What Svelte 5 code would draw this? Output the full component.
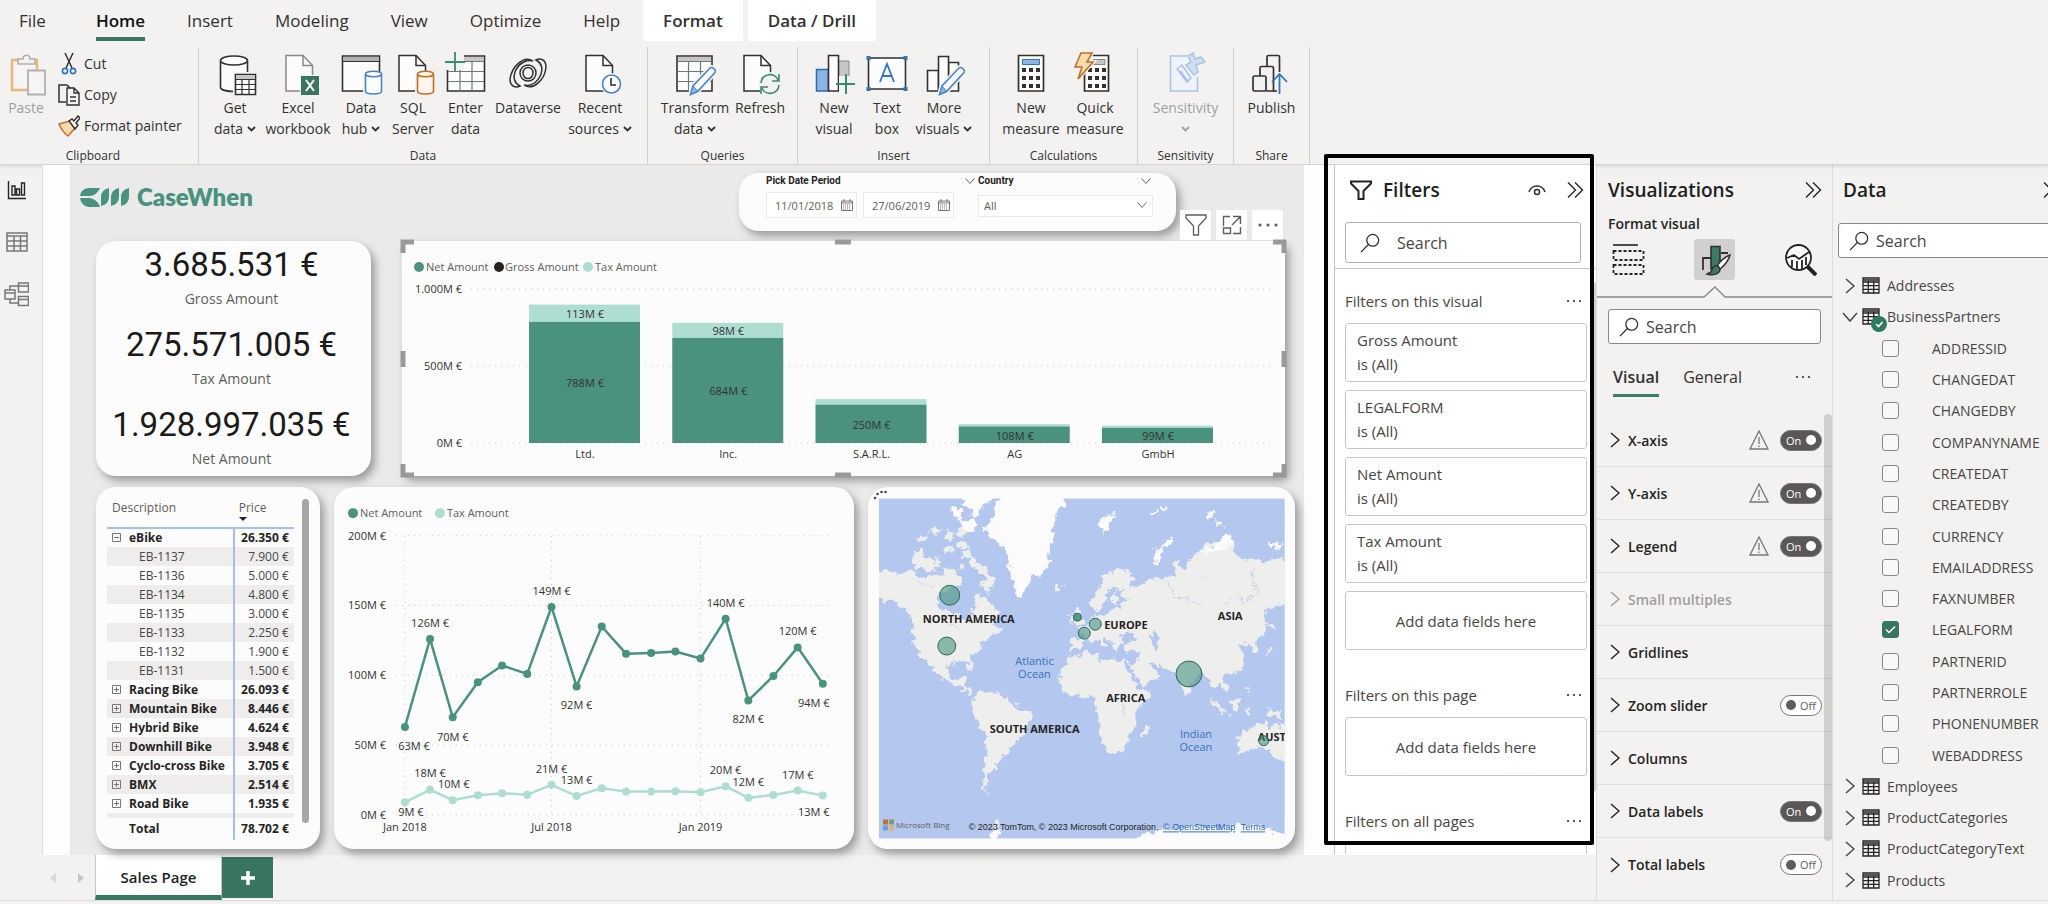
<script>
  const menu = ['File', 'Home', 'Insert', 'Modeling', 'View', 'Optimize', 'Help']
  const contextMenu = ['Format', 'Data / Drill']

  const groups = [
    {
      id: 'get',
      label: 'Data',
      tools: [
        { icon: 'getdata', lines: ['Get', 'data'], menu: true },
        { icon: 'excel', lines: ['Excel', 'workbook'] },
        { icon: 'hub', lines: ['Data', 'hub'], menu: true },
        { icon: 'sql', lines: ['SQL', 'Server'] },
        { icon: 'enter', lines: ['Enter', 'data'] },
        { icon: 'dataverse', lines: ['Dataverse'] },
        { icon: 'recent', lines: ['Recent', 'sources'], menu: true }
      ]
    },
    {
      id: 'queries',
      label: 'Queries',
      tools: [
        { icon: 'transform', lines: ['Transform', 'data'], menu: true },
        { icon: 'refresh', lines: ['Refresh'] }
      ]
    },
    {
      id: 'insert',
      label: 'Insert',
      tools: [
        { icon: 'newvisual', lines: ['New', 'visual'] },
        { icon: 'textbox', lines: ['Text', 'box'] },
        { icon: 'morevisuals', lines: ['More', 'visuals'], menu: true }
      ]
    },
    {
      id: 'calc',
      label: 'Calculations',
      tools: [
        { icon: 'measure', lines: ['New', 'measure'] },
        { icon: 'quick', lines: ['Quick', 'measure'] }
      ]
    },
    {
      id: 'single',
      label: 'Sensitivity',
      tools: [{ icon: 'sensitivity', lines: ['Sensitivity', ''], menu: true, disabled: true }]
    },
    { id: 'single', label: 'Share', tools: [{ icon: 'publish', lines: ['Publish'] }] }
  ]

  const kpis = [
    { value: '3.685.531 €', label: 'Gross Amount' },
    { value: '275.571.005 €', label: 'Tax Amount' },
    { value: '1.928.997.035 €', label: 'Net Amount' }
  ]

  const products = [
    { name: 'eBike', price: '26.350 €', open: true },
    { name: 'EB-1137', price: '7.900 €', child: true },
    { name: 'EB-1136', price: '5.000 €', child: true },
    { name: 'EB-1134', price: '4.800 €', child: true },
    { name: 'EB-1135', price: '3.000 €', child: true },
    { name: 'EB-1133', price: '2.250 €', child: true },
    { name: 'EB-1132', price: '1.900 €', child: true },
    { name: 'EB-1131', price: '1.500 €', child: true },
    { name: 'Racing Bike', price: '26.093 €' },
    { name: 'Mountain Bike', price: '8.446 €' },
    { name: 'Hybrid Bike', price: '4.624 €' },
    { name: 'Downhill Bike', price: '3.948 €' },
    { name: 'Cyclo-cross Bike', price: '3.705 €' },
    { name: 'BMX', price: '2.514 €' },
    { name: 'Road Bike', price: '1.935 €' }
  ]

  // bar chart, values in millions
  const legalForms = [
    { name: 'Ltd.', net: 788, tax: 113 },
    { name: 'Inc.', net: 684, tax: 98 },
    { name: 'S.A.R.L.', net: 250, tax: 36 },
    { name: 'AG', net: 108, tax: 15 },
    { name: 'GmbH', net: 99, tax: 14 }
  ]
  const bars = legalForms.map((f, i) => {
    const x = 127 + i * 143.25
    const netH = f.net * 0.1536
    const taxH = f.tax * 0.1536
    return { ...f, x, netH, taxH, netY: 202 - netH, taxY: 202 - netH - taxH }
  })

  // line chart, one point per month start, values in millions
  const days = [0, 31, 59, 90, 120, 151, 181, 212, 243, 273, 304, 334, 365, 396, 424, 455, 485, 516]
  const net = [63, 126, 70, 95, 107, 101, 149, 92, 135, 115.5, 116, 117, 112, 140.5, 82, 99.5, 120, 94]
  const tax = [9, 18, 10.5, 14, 15.5, 14.5, 21.5, 13.5, 19, 16.7, 16.7, 17, 16.2, 20.5, 12.2, 14.3, 17.4, 13.8]
  const px = i => 71 + days[i] * 0.8105
  const py = v => 328 - v * 1.397
  const line = values => values.map((v, i) => `${px(i)},${py(v)}`).join(' ')

  const netLabels = [
    { i: 0, text: '63M €', dx: 9, dy: 23 },
    { i: 1, text: '126M €', dx: 0, dy: -12 },
    { i: 2, text: '70M €', dx: 0, dy: 24 },
    { i: 6, text: '149M €', dx: 0, dy: -12 },
    { i: 7, text: '92M €', dx: 0, dy: 23 },
    { i: 13, text: '140M €', dx: 0, dy: -12 },
    { i: 14, text: '82M €', dx: 0, dy: 23 },
    { i: 16, text: '120M €', dx: 0, dy: -12 },
    { i: 17, text: '94M €', dx: -9, dy: 23 }
  ]
  const taxLabels = [
    { i: 0, text: '9M €', dx: 6, dy: 14 },
    { i: 1, text: '18M €', dx: 0, dy: -13 },
    { i: 2, text: '10M €', dx: 1, dy: -12 },
    { i: 6, text: '21M €', dx: 0, dy: -12 },
    { i: 7, text: '13M €', dx: 0, dy: -12 },
    { i: 13, text: '20M €', dx: 0, dy: -12 },
    { i: 14, text: '12M €', dx: 0, dy: -12 },
    { i: 16, text: '17M €', dx: 0, dy: -12 },
    { i: 17, text: '13M €', dx: -9, dy: 20 }
  ]

  const bubbles = [
    { x: 71, y: 97, r: 10 },
    { x: 68, y: 148, r: 9 },
    { x: 199, y: 119, r: 4, dark: true },
    { x: 217, y: 126, r: 6 },
    { x: 206, y: 135, r: 6 },
    { x: 311, y: 176, r: 13 },
    { x: 386, y: 243, r: 5 }
  ]

  const visualFilters = ['Gross Amount', 'LEGALFORM', 'Net Amount', 'Tax Amount']

  let settings = $state([
    { name: 'X-axis', warn: true, on: true },
    { name: 'Y-axis', warn: true, on: true },
    { name: 'Legend', warn: true, on: true },
    { name: 'Small multiples', disabled: true },
    { name: 'Gridlines' },
    { name: 'Zoom slider', on: false },
    { name: 'Columns' },
    { name: 'Data labels', on: true },
    { name: 'Total labels', on: false }
  ])

  let fields = $state(
    [
      'ADDRESSID', 'CHANGEDAT', 'CHANGEDBY', 'COMPANYNAME', 'CREATEDAT', 'CREATEDBY', 'CURRENCY',
      'EMAILADDRESS', 'FAXNUMBER', 'LEGALFORM', 'PARTNERID', 'PARTNERROLE', 'PHONENUMBER', 'WEBADDRESS'
    ].map(name => ({ name, checked: name === 'LEGALFORM' }))
  )
  const moreTables = ['Employees', 'ProductCategories', 'ProductCategoryText', 'Products']
</script>

{#snippet chevron(dir)}
  <svg class="chev {dir}" viewBox="0 0 10 16" width="10" height="16" aria-hidden="true">
    <path d="M1 1l8 7-8 7" fill="none" stroke="currentColor" stroke-width="1.5" />
  </svg>
{/snippet}

{#snippet caret()}
  <svg class="caret" viewBox="0 0 9 6" width="9" height="6" aria-hidden="true">
    <path d="M1 1l3.500 3.500L8 1" fill="none" stroke="currentColor" stroke-width="1.800" />
  </svg>
{/snippet}

{#snippet collapse()}
  <svg viewBox="0 0 17 18" width="17" height="18" aria-hidden="true">
    <path d="M1 1.500l7.500 7.500L1 16.500M8 1.500l7.500 7.500L8 16.500" fill="none" stroke="#252423" stroke-width="1.400" />
  </svg>
{/snippet}

{#snippet magnifier()}
  <svg class="magnifier" viewBox="0 0 22 22" width="20" height="20" aria-hidden="true">
    <circle cx="14" cy="8" r="6.500" fill="none" stroke="#323130" stroke-width="1.400" />
    <path d="M9.300 12.700L1 21" stroke="#323130" stroke-width="1.400" />
  </svg>
{/snippet}

{#snippet dots()}
  <svg viewBox="0 0 18 4" width="18" height="4" aria-hidden="true">
    <circle cx="3" cy="2" r="1.100" fill="#323130" /><circle cx="9" cy="2" r="1.100" fill="#323130" /><circle cx="15" cy="2" r="1.100" fill="#323130" />
  </svg>
{/snippet}

{#snippet tableIcon()}
  <svg viewBox="0 0 18 17" width="18" height="17" aria-hidden="true">
    <path d="M1 1h16v15H1zM1 3h16M1 5h16M1 8.700h16M1 12.300h16M6.300 4v12M11.700 4v12" fill="none" stroke="#252423" stroke-width="1.300" />
  </svg>
{/snippet}

{#snippet doc(x, stroke)}
  <path d="M{x} 3.500h17l9.500 10V39H{x}z" fill="#fcfcfc" stroke={stroke} stroke-width="1.500" />
  <path d="M{x + 17} 3.500v10h9.500" fill="none" stroke={stroke} stroke-width="1.500" />
{/snippet}

{#snippet smallCylinder(stroke, fill)}
  <path d="M26.500 22v17c0 4 16 4 16 0V22" fill="#f3f2f1" stroke="#f3f2f1" stroke-width="5" />
  <path d="M26.500 22v17c0 4 16 4 16 0V22" fill={fill} stroke={stroke} stroke-width="1.600" />
  <ellipse cx="34.500" cy="22" rx="8" ry="2.800" fill={fill} stroke={stroke} stroke-width="1.600" />
{/snippet}

{#snippet pencil()}
  <path d="M17.500 42.500l2.500-8.500 17-18c2-1.500 6.500 1.500 5 4.500L24.500 39.500z" fill="#f3f2f1" stroke="#f3f2f1" stroke-width="5" />
  <path d="M17.500 42.500l2.500-8.500 17-18c2-1.500 6.500 1.500 5 4.500L24.500 39.500z" fill="#fcfcfc" stroke="#4a83c4" stroke-width="1.600" />
  <path d="M17.500 42.500l2.500-8.500 4.500 5z" fill="#8ab4e6" stroke="#4a83c4" />
{/snippet}

{#snippet keypad(x)}
  {#each [18, 26, 34] as ky}
    {#each [3, 10, 17] as kx}
      <rect x={x + kx + 1} y={ky - 2} width="4" height="4" fill="#323130" />
    {/each}
  {/each}
{/snippet}

{#snippet toolIcon(name)}
  <svg class="tool-icon" viewBox="0 0 44 44" width="44" height="44" aria-hidden="true">
    {#if name === 'getdata'}
      <path d="M7.500 9v26c0 6 27 6 27 0V9" fill="#fcfcfc" stroke="#323130" stroke-width="1.600" />
      <ellipse cx="21" cy="8.500" rx="13.500" ry="4.500" fill="#fcfcfc" stroke="#323130" stroke-width="1.600" />
      <path d="M20 20h25v25H20z" fill="#f3f2f1" />
      <path d="M22.500 22.500h20v20h-20z" fill="#fcfcfc" stroke="#323130" stroke-width="1.600" />
      <path d="M23 23h19v4H23z" fill="#c8c6c4" />
      <path d="M22.500 27.500h20M22.500 32.500h20M22.500 37.500h20M29 27v15M36 27v15" stroke="#323130" stroke-width="1.200" />
    {:else if name === 'excel'}
      {@render doc(10, '#8a8886')}
      <path d="M24 23h20v20H24z" fill="#f3f2f1" />
      <path d="M25 24h18v19H25z" fill="#3a7562" />
      <path d="M30 28l8 11M38 28l-8 11" stroke="#fff" stroke-width="2" />
    {:else if name === 'hub'}
      <path d="M3.500 4h37v35h-37z" fill="#fcfcfc" stroke="#323130" stroke-width="1.600" />
      <path d="M4 5h36v4H4z" fill="#b3b0ad" />
      <path d="M4 9.500h36" stroke="#323130" />
      {@render smallCylinder('#4a83c4', '#fcfcfc')}
    {:else if name === 'sql'}
      {@render doc(8, '#323130')}
      {@render smallCylinder('#c0702a', '#fcf5ec')}
    {:else if name === 'enter'}
      <path d="M3.500 4h37v35h-37z" fill="#fcfcfc" stroke="#323130" stroke-width="1.600" />
      <path d="M16 5h24v4H16z" fill="#c8c6c4" />
      <path d="M16 9.500h24M4 19.500h36M4 29.500h36M16 9v30M28 9v30" stroke="#69797e" stroke-width="1.200" />
      <path d="M0 0h20v18H0z" fill="#f3f2f1" />
      <path d="M11 0v20M1 10h20" stroke="#3a8a6c" stroke-width="1.800" />
    {:else if name === 'dataverse'}
      <g fill="none" stroke="#323130" stroke-width="1.500">
        <path d="M27 9C18 3 6 14 4 27c0 8 6 9 10 7-6-3-7-9-5-14 3-8 11-13 18-11z" />
        <path d="M18 33c9 6 21-5 22-18 0-8-6-9-10-7 6 3 7 9 5 14-3 8-10 13-17 11z" />
        <ellipse cx="22" cy="21" rx="8" ry="8" />
        <ellipse cx="22" cy="21" rx="5" ry="5.500" />
      </g>
    {:else if name === 'recent'}
      {@render doc(8, '#323130')}
      <circle cx="33.500" cy="32" r="11" fill="#f3f2f1" />
      <circle cx="33.500" cy="32" r="9" fill="#fcfcfc" stroke="#4a83c4" stroke-width="1.600" />
      <path d="M33 26v7h5" fill="none" stroke="#323130" stroke-width="1.600" />
    {:else if name === 'transform'}
      <path d="M4 4h35v35H4z" fill="#fcfcfc" stroke="#323130" stroke-width="1.600" />
      <path d="M5 5h33v4H5z" fill="#c8c6c4" />
      <path d="M4 9.500h35M4 19.500h35M4 29.500h35M15.500 9v30M27.500 9v30" stroke="#69797e" stroke-width="1.200" />
      {@render pencil()}
    {:else if name === 'refresh'}
      {@render doc(6, '#323130')}
      <circle cx="32" cy="32" r="12" fill="#f3f2f1" />
      <path d="M23 31c1-10 14-11 17-3M41 33c-1 10-14 11-17 3" fill="none" stroke="#3a8a6c" stroke-width="1.600" />
      <path d="M41 22v7h-7M23 42v-7h7" fill="none" stroke="#3a8a6c" stroke-width="1.600" />
    {:else if name === 'newvisual'}
      <path d="M26 9h11v30H26z" fill="#c8c6c4" stroke="#8a8886" />
      <path d="M4.500 17.500h12V39h-12z" fill="#8ab4e6" stroke="#2b6cb0" stroke-width="1.500" />
      <path d="M16.500 3.500h10V39h-10z" fill="#fcfcfc" stroke="#323130" stroke-width="1.600" />
      <path d="M27 24h17v18H27z" fill="#f3f2f1" />
      <path d="M34 22v20M24 32h19" stroke="#3a8a6c" stroke-width="2" />
    {:else if name === 'textbox'}
      <path d="M3.500 6h37v31h-37z" fill="#fcfcfc" stroke="#323130" stroke-width="1.600" />
      <path d="M1.500 4h4v4h-4zM38.500 4h4v4h-4zM1.500 35h4v4h-4zM38.500 35h4v4h-4z" fill="#3173bd" />
      <path d="M15 30l7-18 7 18M17.500 24h9" fill="none" stroke="#3173bd" stroke-width="1.800" />
    {:else if name === 'morevisuals'}
      <path d="M5.500 18.500h11V39h-11zM26.500 10.500h10V39h-10z" fill="#fcfcfc" stroke="#323130" stroke-width="1.600" />
      <path d="M16.500 4.500h10V39h-10z" fill="#fcfcfc" stroke="#323130" stroke-width="1.600" />
      {@render pencil()}
    {:else if name === 'measure'}
      <path d="M9.500 3.500h25V39h-25z" fill="#fcfcfc" stroke="#323130" stroke-width="1.700" />
      <path d="M13.500 7.500h17v5h-17z" fill="#8ab4e6" stroke="#3173bd" />
      {@render keypad(9)}
    {:else if name === 'quick'}
      <path d="M11.500 3.500h24V39h-24z" fill="#fcfcfc" stroke="#323130" stroke-width="1.700" />
      <path d="M20 7.500h12v5H20z" fill="#c8c6c4" stroke="#8a8886" />
      {@render keypad(11)}
      <path d="M8 1h11l-5 9h6L5 27l4-12H2z" fill="#f3f2f1" stroke="#f3f2f1" stroke-width="4" />
      <path d="M8 1h11l-5 9h6L5 27l4-12H2z" fill="#fbdcae" stroke="#c0702a" stroke-width="1.600" />
    {:else if name === 'sensitivity'}
      <g fill="#eef3fa" stroke="#a9c3e6" stroke-width="1.500">
        <path d="M23 4H6.500v35h27V25" />
        <path d="M13 17l5-4 9 13-4 4zM16.500 19l8 11" />
        <path d="M22 13l8 10 4-3-2-7 9-3-4-5-6 2-2-6-5 3 3 6z" fill="#cfdef2" />
      </g>
    {:else if name === 'publish'}
      <g fill="none" stroke="#323130" stroke-width="1.700">
        <rect x="3" y="24" width="13" height="15" rx="1.500" />
        <path d="M10 24V16q0-1.500 1.500-1.500H22q1.500 0 1.500 1.500v23H16" />
        <path d="M17 14V5q0-1.500 1.500-1.500H28q1.500 0 1.500 1.500v15M23 39h4" />
      </g>
      <path d="M29.500 42V22M22 30l7.500-8 7.500 8" fill="none" stroke="#3173bd" stroke-width="1.800" />
    {/if}
  </svg>
{/snippet}

{#snippet searchBox(id, label)}
  <div class="search">
    {@render magnifier()}
    <input {id} type="text" placeholder="Search" aria-label={label} />
  </div>
{/snippet}

<div class="shell">
  <header class="ribbon">
    <nav class="menu" aria-label="Ribbon tabs">
      {#each menu as item}
        <button class="menu-tab" class:active={item === 'Home'}><span>{item}</span></button>
      {/each}
      {#each contextMenu as item}
        <button class="menu-tab context">{item}</button>
      {/each}
    </nav>

    <div class="groups">
      <section class="group">
        <div class="clipboard">
          <button class="tool disabled" disabled>
            <svg class="tool-icon" viewBox="0 0 44 44" width="44" height="44" aria-hidden="true">
              <path d="M8 8h25v30H8z" fill="none" stroke="#e8b87c" stroke-width="2.500" />
              <path d="M11 10h20v26H11z" fill="#f6f5f4" />
              <path d="M14 12V7h5c0-5 7-5 7 0h5v5z" fill="#f3f2f1" stroke="#b3b0ad" stroke-width="1.600" />
              <path d="M24 18.500h17v24H24z" fill="#f6f5f4" stroke="#b3b0ad" stroke-width="1.800" />
            </svg>
            <span>Paste</span>
          </button>
          <div class="clip-actions">
            <button>
              <svg viewBox="0 0 22 22" width="22" height="22" aria-hidden="true">
                <path d="M7 0l7 15M15 0L8 15" stroke="#323130" stroke-width="1.500" />
                <circle cx="7" cy="18" r="2.600" fill="none" stroke="#3173bd" stroke-width="1.600" />
                <circle cx="15" cy="18" r="2.600" fill="none" stroke="#3173bd" stroke-width="1.600" />
              </svg>
              Cut
            </button>
            <button>
              <svg viewBox="0 0 22 22" width="22" height="22" aria-hidden="true">
                <path d="M8 18H1V1h8l3 3" fill="none" stroke="#323130" stroke-width="1.500" />
                <path d="M9 4h7l5 5v12H9zM16 4v5h5M12 13h6M12 17h6" fill="none" stroke="#323130" stroke-width="1.400" />
              </svg>
              Copy
            </button>
            <button>
              <svg viewBox="0 0 22 22" width="22" height="22" aria-hidden="true">
                <path d="M12 6l-11 3c2 5 5 9 9 12l8-9z" fill="#fbdcae" stroke="#c0702a" stroke-width="1.500" />
                <path d="M11 6l3-2 2 2 4-5 2 2-4 5 2 2-3 4z" fill="#fcfcfc" stroke="#323130" stroke-width="1.500" />
              </svg>
              Format painter
            </button>
          </div>
        </div>
        <h2>Clipboard</h2>
      </section>

      {#each groups as group}
        <section class="group">
          <div class="tools {group.id}">
            {#each group.tools as tool}
              <button class="tool" class:disabled={tool.disabled} disabled={tool.disabled}>
                {@render toolIcon(tool.icon)}
                {#each tool.lines as text, i}
                  <span>{text}{#if tool.menu && i === 1}{@render caret()}{/if}</span>
                {/each}
              </button>
            {/each}
          </div>
          <h2>{group.label}</h2>
        </section>
      {/each}
    </div>
  </header>

  <div class="workspace">
    <div class="main">
      <div class="stage">
        <nav class="views" aria-label="Views">
          <button aria-label="Report view">
            <svg viewBox="0 0 20 20" width="20" height="20" aria-hidden="true">
              <path d="M1.500 1v17.500H19M5 6h3v9H5zM9.500 9h3v6h-3zM14.500 3h3v12h-3z" fill="none" stroke="#252423" stroke-width="1.400" />
            </svg>
          </button>
          <button aria-label="Data view">
            <svg viewBox="0 0 22 20" width="22" height="20" aria-hidden="true">
              <path d="M1 1h20v18H1zM1 4h20M1 9h20M1 14h20M8 4v15M14.500 4v15" fill="none" stroke="#797775" stroke-width="1.500" />
            </svg>
          </button>
          <button aria-label="Model view">
            <svg viewBox="0 0 25 25" width="25" height="25" aria-hidden="true">
              <path d="M1 8h10v9H1zM1 11h10M14.500 1h10v9h-10zM14.500 4h10M14.500 14.500h10v9h-10zM14.500 17.500h10M6 8V4h8M6 17v4h8" fill="none" stroke="#797775" stroke-width="1.500" />
            </svg>
          </button>
        </nav>

        <main class="canvas">
          <div class="page">
            <div class="page-head">
              <div class="brand">
                <svg viewBox="0 0 50 19" width="50" height="19" aria-hidden="true">
                  <g fill="#48927f">
                    <path d="M20 0H8Q1 1 0 8h10Q17 7 20 0zM0 10q1 7 8 9h12q-2-7-10-9z" />
                    <path d="M29 0q-8 2-8 9v9q8-2 8-9zM39 0q-8 2-8 9v9q8-2 8-9zM49 0q-8 2-8 9v9q8-2 8-9z" />
                  </g>
                </svg>
                <span>CaseWhen</span>
              </div>

              <div class="card slicers">
                <div class="slicer period">
                  <div class="slicer-title">
                    <label for="from">Pick Date Period</label>
                    {@render chevron('down small')}
                  </div>
                  <div class="dates">
                    {#each [['from', '11/01/2018'], ['to', '27/06/2019']] as [id, value]}
                      <div class="date">
                        <input {id} type="text" {value} aria-label={id === 'to' ? 'Period end' : undefined} />
                        <svg viewBox="0 0 12 12" width="12" height="12" aria-hidden="true">
                          <path d="M.500 2h11v9.500H.500zM.500 4h11M3 0v3M9 0v3" fill="none" stroke="#797775" />
                          <path d="M2 6h8M2 8h8M2 10h8" stroke="#797775" stroke-dasharray="1 1" />
                        </svg>
                      </div>
                    {/each}
                  </div>
                </div>
                <div class="slicer country">
                  <div class="slicer-title">
                    <label for="country">Country</label>
                    {@render chevron('down small')}
                  </div>
                  <div class="select">
                    <select id="country"><option>All</option></select>
                    {@render chevron('down small')}
                  </div>
                </div>
              </div>
            </div>

            <div class="row top">
              <div class="card kpis">
                {#each kpis as kpi}
                  <strong>{kpi.value}</strong>
                  <span>{kpi.label}</span>
                {/each}
              </div>

              <div class="card selected">
                <div class="visual-tools">
                  <button aria-label="Filters on visual">
                    <svg viewBox="0 0 22 22" width="22" height="22" aria-hidden="true">
                      <path d="M1 1h20v3l-7.500 8v9h-5v-9L1 4z" fill="none" stroke="#605e5c" stroke-width="1.300" />
                    </svg>
                  </button>
                  <button aria-label="Focus mode">
                    <svg viewBox="0 0 20 20" width="20" height="20" aria-hidden="true">
                      <path d="M8 1.500H1.500V11M11 1.500h7.500V9M18 2l-8 8M1.500 13h7v5.500h-7zM11 18.500h7.500V12" fill="none" stroke="#605e5c" stroke-width="1.400" />
                    </svg>
                  </button>
                  <button aria-label="More options">
                    <svg viewBox="0 0 20 4" width="20" height="4" aria-hidden="true">
                      <circle cx="2" cy="2" r="1.600" /><circle cx="10" cy="2" r="1.600" /><circle cx="18" cy="2" r="1.600" />
                    </svg>
                  </button>
                </div>
                <svg class="chart" viewBox="0 0 883 235" role="img" aria-label="Net, gross and tax amount by legal form">
                  <g class="legend">
                    <circle cx="17" cy="26" r="5" fill="#48927f" /><text x="24" y="30">Net Amount</text>
                    <circle cx="97" cy="26" r="5" fill="#252423" /><text x="103" y="30">Gross Amount</text>
                    <circle cx="186" cy="26" r="5" fill="#aeddd2" /><text x="193" y="30">Tax Amount</text>
                  </g>
                  {#each [['1.000M €', 48], ['500M €', 125], ['0M €', 202]] as [text, y]}
                    <text class="end" x="60" y={y + 4}>{text}</text>
                    <line class="grid" x1="69" x2="872" y1={y} y2={y} />
                  {/each}
                  {#each bars as b}
                    <rect x={b.x} y={b.taxY} width="111" height={b.taxH} fill="#aeddd2" />
                    <rect x={b.x} y={b.netY} width="111" height={b.netH} fill="#4a927e" />
                    {#if b.tax > 50}
                      <text class="mid" x={b.x + 56} y={b.taxY + b.taxH / 2 + 5}>{b.tax}M €</text>
                    {/if}
                    <text class="mid" x={b.x + 56} y={b.netY + b.netH / 2 + 5}>{b.net}M €</text>
                    <text class="mid" x={b.x + 56} y="217">{b.name}</text>
                  {/each}
                </svg>
                <svg class="handles" viewBox="0 0 887 239" aria-hidden="true">
                  <g fill="none" stroke="#9a9998" stroke-width="5">
                    <path d="M3 14V3h11M873 3h11v11M3 225v11h11M873 236h11v-11" />
                    <path d="M3 112v16M884 112v16M435 3h16M435 236h16" />
                  </g>
                </svg>
              </div>
            </div>

            <div class="row bottom">
              <div class="card matrix">
                <table>
                  <thead>
                    <tr><th>Description</th><th>Price<i class="sort"></i></th></tr>
                  </thead>
                  <tbody>
                    {#each products as p}
                      <tr class:child={p.child}>
                        <td>
                          {#if !p.child}
                            <svg viewBox="0 0 9 9" width="9" height="9" aria-hidden="true">
                              <path d="M.500.500h8v8h-8zM2 4.500h5{p.open ? '' : 'M4.500 2v5'}" fill="none" stroke="#797775" />
                            </svg>
                          {/if}{p.name}
                        </td>
                        <td>{p.price}</td>
                      </tr>
                    {/each}
                    <tr class="cut"><td></td><td></td></tr>
                  </tbody>
                  <tfoot>
                    <tr><td>Total</td><td>78.702 €</td></tr>
                  </tfoot>
                </table>
                <div class="matrix-scroll"></div>
              </div>

              <div class="card">
                <svg class="chart" viewBox="0 0 521 362" role="img" aria-label="Net and tax amount by month">
                  <g class="legend">
                    <circle cx="19" cy="26" r="5" fill="#48927f" /><text x="26" y="30">Net Amount</text>
                    <circle cx="106" cy="26" r="5" fill="#aeddd2" /><text x="113" y="30">Tax Amount</text>
                  </g>
                  {#each [200, 150, 100, 50, 0] as v}
                    <text class="end" x="52" y={py(v) + 4}>{v}M €</text>
                    <line class="grid" x1="62" x2="499" y1={py(v)} y2={py(v)} />
                  {/each}
                  {#each [[0, 'Jan 2018'], [6, 'Jul 2018'], [12, 'Jan 2019']] as [i, text]}
                    <line class="grid" x1={px(i)} x2={px(i)} y1="49" y2="328" />
                    <text class="mid" x={px(i)} y="344">{text}</text>
                  {/each}
                  <polyline points={line(net)} fill="none" stroke="#48927f" stroke-width="2.500" />
                  <polyline points={line(tax)} fill="none" stroke="#aeddd2" stroke-width="2.500" />
                  {#each days as _, i}
                    <circle cx={px(i)} cy={py(net[i])} r="4" fill="#48927f" />
                    <circle cx={px(i)} cy={py(tax[i])} r="4" fill="#aeddd2" />
                  {/each}
                  {#each netLabels as l}
                    <text class="mid" x={px(l.i) + l.dx} y={py(net[l.i]) + l.dy}>{l.text}</text>
                  {/each}
                  {#each taxLabels as l}
                    <text class="mid" x={px(l.i) + l.dx} y={py(tax[l.i]) + l.dy}>{l.text}</text>
                  {/each}
                </svg>
              </div>

              <div class="card map">
                <svg class="loading" viewBox="0 0 14 10" width="14" height="10" aria-hidden="true">
                  <circle cx="2" cy="8" r="1.300" /><circle cx="4.500" cy="4" r="1.300" /><circle cx="8.500" cy="2" r="1.300" /><circle cx="12.500" cy="2" r="1.300" />
                </svg>
                <svg class="world" viewBox="0 0 407 341" role="img" aria-label="Net amount by country">
                  <defs>
                    <filter id="coast" x="-5%" y="-5%" width="110%" height="110%">
                      <feTurbulence type="fractalNoise" baseFrequency="0.05" numOctaves="3" seed="4" />
                      <feDisplacementMap in="SourceGraphic" scale="34" xChannelSelector="R" yChannelSelector="G" />
                    </filter>
                  </defs>
                  <rect width="407" height="341" fill="#b3c7ef" />
                  <g transform="scale(.3333) translate(-87 -55)" filter="url(#coast)">
                    <g fill="#eeeeed">
                      <path d="M60 268L120 270 150 282 180 272 215 290 250 292 290 285 330 290 335 310 300 325 262 345 266 375 290 392 325 400 345 425 362 425 365 400 382 378 372 345 400 345 412 365 440 390 450 405 430 425 440 440 452 455 425 470 400 485 385 515 362 540 370 572 358 568 348 548 318 548 298 560 295 590 308 602 330 600 340 585 352 590 345 610 355 630 372 642 355 642 335 622 300 612 270 595 250 570 232 545 220 535 205 515 190 495 188 455 192 425 170 405 150 375 125 362 60 358z" />
                      <path d="M195 212l18-4 12 20 14-4 8 22 16 6-6 22-26 6-16-14-16 8-8-28zM252 236l16 2 4 20-18 6zM196 176l26-14 14 8-22 18zM240 152l22-10 14 8-20 10zM284 156l22-4 8 20-20 14-8-12zM322 150l28-10 8 16-22 14-16-6zM280 200l28-6 6 14-24 8zM318 184l34 4 6 16-34 2z" />
                      <path d="M336 214l22-6 22 38 24 14 12 26 22 14-10 20-26 8-6-22 10-10-18-26-20-14-6-22-20 4zM330 250l14 4 4 16-16-4zM398 318l20 8 2 14-16-8zM282 262l30 4 14 16-30 8-20-14z" />
                      <path d="M380 640L400 632 440 640 470 660 500 680 545 690 552 705 530 740 520 770 490 790 485 815 460 830 440 860 425 870 412 900 410 930 422 944 400 925 402 880 410 830 412 760 395 745 370 705 372 670z" />
                      <path d="M660 530L690 522 735 515 742 535 775 545 825 540 830 560 850 595 868 630 905 635 890 665 858 700 860 745 845 760 838 790 815 822 780 826 765 800 748 755 752 720 740 690 738 655 700 648 665 655 640 635 630 610 632 580 650 555z" />
                      <path d="M895 732l5 13-12 37-12-7 4-30zM610 318l18-6 12 8-12 13-16-4zM680 385l12 8 8 38-22 6 4-25zM662 408l12-4 0 18-12 2z" />
                      <path d="M662 485L662 508 680 512 695 505 705 488 730 478 745 482 765 502 778 497 760 475 775 475 795 498 802 516 812 500 815 488 830 492 820 505 825 515 870 515 868 535 850 548 835 545 860 590 878 622 920 600 938 580 915 568 895 548 905 546 945 568 975 572 985 600 1005 642 1022 642 1030 610 1055 578 1075 585 1085 605 1098 630 1110 615 1135 637 1142 620 1120 595 1135 583 1165 578 1190 550 1185 520 1170 505 1185 490 1205 495 1215 520 1228 515 1220 485 1250 455 1255 425 1245 400 1280 380 1340 368 1340 240 1280 235 1250 250 1215 235 1185 240 1150 215 1155 180 1125 165 1110 190 1070 195 1045 215 1020 240 1000 270 985 235 975 265 980 300 955 285 940 300 905 295 880 305 870 320 840 322 862 295 830 270 800 265 765 290 745 330 725 352 725 385 745 395 765 370 780 325 795 325 785 360 822 385 800 388 760 405 735 408 720 425 690 445 700 472 665 480z" />
                      <path d="M1090 655l40 45-8 6-35-42zM1145 670l25-15 5 25-20 10zM1125 700l30 6-5 5zM1190 685l15-5-5 30zM1190 610l10 20 5 25zM1250 685l45 15 5 20-40-18zM1240 530l30-30 5 5-20 25zM1255 430l20 10-5 15z" />
                      <path d="M1165 772L1195 750 1215 740 1235 728 1250 730 1260 750 1275 735 1340 740 1340 845 1285 840 1265 815 1230 800 1200 815 1172 825z" />
                    </g>
                    <g fill="#fbfbfb">
                      <path d="M430 75L470 40 640 40 645 75 620 100 612 130 610 180 600 215 598 255 580 280 545 290 540 310 525 325 520 352 508 356 495 345 490 310 480 270 470 220 455 190 430 180 400 145 420 125 432 100z" />
                      <path d="M336 40l92 0-6 30-28 12-8 26-16 6-4-26-20-12zM304 84l18-6 14 16-4 26-20-8zM330 124l34-6 20 14-14 22-28-4z" />
                      <path d="M745 115l55-18-15 30-20 35-15-20zM915 250l5-45 50-35 5 8-35 30-15 45zM1075 85l20 0 5 35-20-5zM1100 120l20 10-5 15zM1060 210l50-20 20-30 28 25-30 20-60 15zM1260 185l40 5-5 12-35-5zM900 95l20-6 8 8-20 6zM930 84l26-4 2 12-22 2z" />
                      <path d="M420 1090l20-70 8 70zM830 1110l60-45 60-20 90-5 70 10 60-15 70 5 60 25 30 5v40z" />
                    </g>
                    <g fill="#b3c7ef">
                      <path d="M815 470l30-14 25 18-15 12-35 2zM905 460l15-5 15 55-12 5-12-25zM795 330l20 0 4 20 25 8-20 8-18 10z" />
                    </g>
                    <g fill="none" stroke="#c9d3e6" stroke-width="3">
                      <path d="M955 300l20 50 50 10 40 25M1120 375l40-25 30 15 40-20-20-50 5-40M1055 285l20 10M190 300l60 20M290 430l60 30M820 670l5 35" />
                    </g>
                  </g>
                  <g class="places">
                    <text x="44" y="125">NORTH AMERICA</text>
                    <text x="111" y="235">SOUTH AMERICA</text>
                    <text x="226" y="131">EUROPE</text>
                    <text x="228" y="204">AFRICA</text>
                    <text x="340" y="122">ASIA</text>
                    <text x="380" y="243">AUST</text>
                  </g>
                  <g class="oceans">
                    <text x="156" y="167">Atlantic</text>
                    <text x="156" y="180">Ocean</text>
                    <text x="318" y="240">Indian</text>
                    <text x="318" y="253">Ocean</text>
                  </g>
                  {#each bubbles as b}
                    <circle cx={b.x} cy={b.y} r={b.r} fill="#48927f" fill-opacity={b.dark ? 0.9 : 0.6} stroke="#2b6653" />
                  {/each}
                  <path d="M4 322h5v5H4z" fill="#c0702a" /><path d="M10 322h5v5h-5z" fill="#7c9a6a" />
                  <path d="M4 328h5v5H4z" fill="#6f9bd8" /><path d="M10 328h5v5h-5z" fill="#e0b070" />
                  <text class="bing" x="17" y="331">Microsoft Bing</text>
                  <text class="credit" x="90" y="333">© 2023 TomTom, © 2023 Microsoft Corporation,</text>
                  <a href="#osm"><text class="credit link" x="285" y="333">© OpenStreetMap</text></a>
                  <a href="#terms"><text class="credit link" x="363" y="333">Terms</text></a>
                </svg>
              </div>
            </div>
          </div>
        </main>

        <aside class="filters">
          <div class="pane-head">
            <svg viewBox="0 0 22 20" width="22" height="20" aria-hidden="true">
              <path d="M1 1.500h20v2l-7.500 7.500v8h-5v-8L1 3.500z" fill="none" stroke="#252423" stroke-width="2" />
            </svg>
            <h1>Filters</h1>
            <svg viewBox="0 0 18 12" width="18" height="12" aria-hidden="true">
              <path d="M1 8q2-6 8-6t8 6" fill="none" stroke="#323130" stroke-width="1.500" />
              <circle cx="9" cy="8" r="2.500" fill="none" stroke="#323130" stroke-width="1.500" />
            </svg>
            <button aria-label="Collapse filters">{@render collapse()}</button>
          </div>
          {@render searchBox('filter-search', 'Search filters')}
          <div class="filter-list">
            <div class="filter-title"><h3>Filters on this visual</h3>{@render dots()}</div>
            {#each visualFilters as name}
              <div class="filter-card"><span>{name}</span><span>is (All)</span></div>
            {/each}
            <div class="filter-card drop">Add data fields here</div>
            <div class="filter-title"><h3>Filters on this page</h3>{@render dots()}</div>
            <div class="filter-card drop">Add data fields here</div>
            <div class="filter-title"><h3>Filters on all pages</h3>{@render dots()}</div>
            <div class="filter-card drop"></div>
          </div>
          <div class="filter-scroll"></div>
          <div class="highlight"></div>
        </aside>
      </div>

      <footer class="page-tabs">
        <button class="arrow left" aria-label="Previous page"></button>
        <button class="arrow right" aria-label="Next page"></button>
        <button class="page-tab">Sales Page</button>
        <button class="add" aria-label="New page">
          <svg viewBox="0 0 14 14" width="14" height="14" aria-hidden="true">
            <path d="M7 0v14M0 7h14" stroke="#fff" stroke-width="3.500" />
          </svg>
        </button>
      </footer>
    </div>

    <aside class="format">
      <div class="pane-head">
        <h1>Visualizations</h1>
        <button aria-label="Collapse visualizations">{@render collapse()}</button>
      </div>
      <h3 class="sub">Format visual</h3>
      <div class="modes">
        <button aria-label="Build visual">
          <svg viewBox="0 0 33 33" width="33" height="33" aria-hidden="true">
            <path d="M1 2h25" stroke="#252423" stroke-width="1.600" />
            <path d="M1.500 8h30v9h-30zM1.500 22h30v9h-30z" fill="none" stroke="#252423" stroke-width="1.800" stroke-dasharray="3 2" />
          </svg>
        </button>
        <button class="on" aria-label="Format visual">
          <svg viewBox="0 0 32 32" width="32" height="32" aria-hidden="true">
            <path d="M4 26V14h8M22 9h7" fill="none" stroke="#323130" stroke-width="1.800" />
            <path d="M12 2.500h9V25h-9z" fill="#3a7a66" stroke="#323130" stroke-width="1.600" />
            <path d="M31 11c-4 1-11 7-13 11l3 3c4-3 9-9 10-14z" fill="#fff" stroke="#323130" stroke-width="1.500" />
            <path d="M19 22c-5-1-6 3-7 6l-4 2c6 2 13 0 13-5z" fill="#3a7a66" stroke="#323130" stroke-width="1.500" />
          </svg>
        </button>
        <button aria-label="Analytics">
          <svg viewBox="0 0 33 33" width="33" height="33" aria-hidden="true">
            <circle cx="14.500" cy="14.500" r="12.500" fill="#fcfcfc" stroke="#252423" stroke-width="1.800" />
            <path d="M3 15l7-3 5 4 10-7M8 17v7M13 18v8M18 17v9M22 14v8" fill="none" stroke="#252423" stroke-width="1.800" />
            <path d="M23.500 23.500L32 32" stroke="#252423" stroke-width="4" />
          </svg>
        </button>
      </div>
      <svg class="pointer" viewBox="0 0 235 13" height="13" aria-hidden="true">
        <path d="M0 11h107l11-10 10 10h107" fill="none" stroke="#8a8886" stroke-width="1.300" />
      </svg>
      {@render searchBox('format-search', 'Search settings')}
      <div class="format-tabs">
        <button class="active">Visual</button>
        <button>General</button>
        {@render dots()}
      </div>
      <div class="settings">
        {#each settings as s, i}
          <div class="setting" class:off={s.disabled}>
            {@render chevron('right')}
            {#if s.on === undefined}
              <span class="name">{s.name}</span>
            {:else}
              <label class="name" for="setting-{i}">{s.name}</label>
            {/if}
            {#if s.warn}
              <svg viewBox="0 0 20 20" width="20" height="20" aria-hidden="true">
                <path d="M10 1l9 18H1zM10 7v7M10 15.500v1.500" fill="none" stroke="#797775" stroke-width="1.300" />
              </svg>
            {/if}
            {#if s.on !== undefined}
              <span class="switch" class:on={s.on}>
                <input id="setting-{i}" type="checkbox" role="switch" bind:checked={s.on} />
                <span>{s.on ? 'On' : 'Off'}</span>
                <i></i>
              </span>
            {/if}
          </div>
        {/each}
        <div class="settings-scroll"></div>
      </div>
    </aside>

    <aside class="data">
      <div class="data-body">
        <div class="pane-head">
          <h1>Data</h1>
          <button aria-label="Collapse data">{@render collapse()}</button>
        </div>
        {@render searchBox('data-search', 'Search data')}
        <div class="tree">
          <div class="node">{@render chevron('right')}{@render tableIcon()}<span>Addresses</span></div>
          <div class="node">
            {@render chevron('down')}
            <span class="badged">
              {@render tableIcon()}
              <svg class="badge" viewBox="0 0 16 16" width="16" height="16" aria-hidden="true">
                <circle cx="8" cy="8" r="8" fill="#2f7a62" />
                <path d="M5 8l2.500 2.500L11.500 6" fill="none" stroke="#fff" stroke-width="1.600" />
              </svg>
            </span>
            <span>BusinessPartners</span>
          </div>
          {#each fields as field}
            <label class="node field">
              <input type="checkbox" bind:checked={field.checked} />
              <span>{field.name}</span>
            </label>
          {/each}
          {#each moreTables as name}
            <div class="node">{@render chevron('right')}{@render tableIcon()}<span>{name}</span></div>
          {/each}
        </div>
      </div>
    </aside>
  </div>
  <div class="status"></div>
</div>

<style>
  :global(body) { background: #f3f2f1; }

  .shell {
    height: 100vh;
    display: flex;
    flex-direction: column;
    overflow: hidden;
    background: #f3f2f1;
    color: #323130;
    font-family: "Open Sans", "Noto Sans", sans-serif;
    font-size: 15px;
  }
  .shell :global(*) { box-sizing: border-box; }
  button {
    padding: 0;
    border: 0;
    background: none;
    color: inherit;
    font: inherit;
  }
  h1, h2, h3 { margin: 0; font-weight: 600; }
  svg { display: block; flex: none; }
  input, select { font: inherit; color: inherit; }

  /* ribbon */
  .ribbon { height: 165px; flex: none; border-bottom: 1px solid #d6d4d2; box-shadow: 0 1px 4px rgba(0, 0, 0, 0.15); position: relative; z-index: 1; }
  .menu { display: flex; height: 41px; }
  .menu-tab { padding: 0 21px; font-size: 17px; height: 41px; }
  .menu-tab:first-child { padding: 0 29px 0 19px; }
  .menu-tab span { display: flex; align-items: center; height: 41px; border-bottom: 4px solid transparent; padding-top: 4px; }
  .menu-tab.active { font-weight: 600; color: #111; }
  .menu-tab.active span { border-color: #3a7562; }
  .menu-tab.context { background: #fff; font-weight: 600; padding: 0 20px; margin-left: 2px; }
  .menu-tab.context + .context { margin-left: 5px; }

  .groups {
    display: grid;
    grid-template-columns: 199px 449px 150px 192px 148px 96px 76px;
    height: 117px;
    margin-top: 6px;
  }
  .group { display: flex; flex-direction: column; justify-content: space-between; border-right: 1px solid #d2d0ce; }
  .group h2 { font-size: 12px; font-weight: 400; line-height: 16px; text-align: center; }
  .group:first-child h2 { padding-right: 12px; }
  .tools { display: grid; padding-top: 5px; }
  .tools.get { grid-template-columns: 62px 64px 62px 42px 63px 62px 82px; padding-left: 5px; }
  .tools.queries { grid-template-columns: 68px 62px; padding-left: 13px; }
  .tools.insert { grid-template-columns: 54px 52px 62px; padding-left: 9px; }
  .tools.calc { grid-template-columns: 64px 64px; padding-left: 9px; }
  .tools.single { grid-template-columns: 1fr; }
  .tool { display: flex; flex-direction: column; align-items: center; white-space: nowrap; font-size: 14px; }
  .tool span { display: flex; align-items: center; gap: 4px; line-height: 21px; min-height: 21px; }
  .tool-icon { margin-bottom: 1px; }
  .tool.disabled { color: #a19f9d; }
  .clipboard { display: flex; padding-top: 5px; gap: 6px; }
  .clipboard .tool { width: 52px; }
  .clip-actions { display: flex; flex-direction: column; font-size: 14px; }
  .clip-actions button { display: flex; align-items: center; gap: 4px; height: 31px; margin-top: -4px; margin-bottom: 4px; white-space: nowrap; }

  /* layout */
  .workspace { flex: 1; display: flex; min-height: 0; }
  .main { flex: 1; display: flex; flex-direction: column; min-width: 0; }
  .stage { flex: 1; display: flex; min-height: 0; position: relative; z-index: 2; }
  .status { height: 4px; flex: none; border-top: 1px solid #dedcda; }

  .views { width: 43px; flex: none; border-right: 1px solid #e1dfdd; display: flex; flex-direction: column; gap: 28px; padding-top: 13px; }
  .views button { display: flex; justify-content: center; align-items: center; width: 33px; height: 24px; }

  .canvas { flex: 1; min-width: 0; background: #fdfdfd; padding: 0 30px 0 27px; display: flex; }
  .page { flex: 1; min-width: 0; background: #eaeaea; display: flex; flex-direction: column; padding: 8px 9px 6px 26px; }
  .page-head { display: flex; justify-content: space-between; align-items: flex-start; height: 58px; margin-bottom: 10px; }
  .brand { display: flex; align-items: center; gap: 7px; margin: 9px 0 0 -16px; color: #48927f; font: 800 24px/30px Lato, sans-serif; }

  .card { background: #fcfcfc; border-radius: 20px; box-shadow: 4px 5px 9px rgba(0, 0, 0, 0.34); position: relative; min-width: 0; min-height: 0; }
  .slicers { display: flex; gap: 1px; width: 437px; height: 58px; margin-right: 119px; padding: 1px 23px 0 27px; color: #605e5c; }
  .slicer label { font: 700 10px/12px Roboto, sans-serif; color: #252423; }
  .slicer { display: flex; flex-direction: column; gap: 5px; }
  .period { width: 211px; }
  .dates { display: flex; gap: 6px; }
  .date { display: flex; align-items: center; width: 91px; height: 26px; border: 1px solid #eaeaea; background: #fff; padding: 0 3px 0 8px; }
  .date input { flex: 1; width: 60px; min-width: 0; border: 0; padding: 0; background: none; font-size: 11px; color: #605e5c; }
  .country { flex: 1; gap: 7px; }
  .slicer-title { display: flex; justify-content: space-between; align-items: center; height: 13px; padding: 0 2px 0 0; }
  .country .slicer-title { padding: 0 2px 0 0; }
  .select { position: relative; height: 22px; }
  .select select { width: 100%; height: 100%; appearance: none; border: 1px solid #eaeaea; background: #fff; padding: 0 5px; font-size: 11px; color: #605e5c; }
  .select :global(.chev) { position: absolute; right: 6px; top: 6px; }

  .row { display: grid; grid-template-rows: minmax(0, 1fr); }
  .row.top { grid-template-columns: 275fr 883fr; gap: 31px; height: 235px; margin: 0 10px 11px 0; }
  .row.bottom { grid-template-columns: 224fr 521fr 427fr; gap: 14px; flex: 1; min-height: 0; }

  .kpis { display: flex; flex-direction: column; align-items: center; padding: 4px 4px 0 0; color: #605e5c; }
  .kpis strong { font: 400 33px/40px Roboto, sans-serif; color: #1b1a19; white-space: nowrap; }
  .kpis span { line-height: 28px; margin-bottom: 12px; font-size: 14px; }

  .chart { width: 100%; height: 100%; font-size: 11px; }
  .chart text { fill: #323130; }
  .legend text { font-size: 11px; fill: #605e5c; }
  .mid { text-anchor: middle; }
  .end { text-anchor: end; }
  .grid { stroke: #c8c6c4; stroke-dasharray: 1 5; }
  .selected { border-radius: 6px; }
  .handles { position: absolute; left: -2px; top: -2px; width: calc(100% + 4px); }
  .visual-tools { position: absolute; right: 2px; bottom: 100%; display: flex; gap: 5px; padding-bottom: 1px; }
  .visual-tools button { width: 31px; height: 30px; background: #fff; display: flex; align-items: center; justify-content: center; fill: #605e5c; }

  .matrix { padding: 12px 11px; display: flex; gap: 8px; align-items: flex-start; overflow: hidden; }
  .matrix table { flex: 1; border-collapse: collapse; font-size: 12px; color: #252423; }
  .matrix td, .matrix th { padding: 0 5px; height: 19px; line-height: 18px; white-space: nowrap; }
  .matrix th { height: 29px; font-weight: 400; text-align: left; vertical-align: top; border-bottom: 2px solid #a3bff0; color: #605e5c; }
  .matrix td:last-child { text-align: right; border-left: 2px solid #a3bff0; }
  .matrix td { font-weight: 700; }
  .matrix td svg { display: inline-block; margin-right: 8px; }
  .matrix tbody tr:nth-child(even) { background: #eeedec; }
  .matrix .child td { font-weight: 400; color: #484644; }
  .matrix .child td:first-child { padding-left: 32px; }
  .matrix .cut td { height: 5px; line-height: 4px; }
  .matrix tfoot td { height: 22px; }
  .matrix tfoot td:first-child { padding-left: 22px; }
  .sort { display: block; width: 0; border: 4px solid transparent; border-top-color: #252423; border-bottom: 0; }
  .matrix-scroll { width: 7px; height: 324px; border-radius: 4px; background: #a6a6a6; }

  .map { padding: 11px 10px 10px 11px; }
  .loading { position: absolute; left: 5px; top: 3px; fill: #484644; }
  .world { width: 100%; height: 100%; overflow: hidden; }
  .places { font-size: 11px; font-weight: 700; fill: #252423; }
  .oceans { font-size: 11px; fill: #3a72b8; text-anchor: middle; }
  .bing { font-size: 8px; fill: #605e5c; }
  .credit { font-family: "Liberation Sans", Arial, sans-serif; font-size: 9px; fill: #252423; }
  .link { fill: #2464b4; text-decoration: underline; }

  /* panes */
  .pane-head { display: flex; align-items: center; gap: 11px; height: 50px; }
  .pane-head h1 { flex: 1; font-size: 19px; color: #201f1e; }
  .search { display: flex; align-items: center; height: 35px; border: 1px solid #8a8886; border-radius: 3px; background: #fff; padding: 0 10px; gap: 7px; }
  .search input { flex: 1; min-width: 0; border: 0; padding: 0; background: none; font-size: 16px; outline: 0; }
  .search input::placeholder { color: #484644; opacity: 1; }

  .filters { position: relative; width: 262px; flex: none; background: #fff; border-left: 1px solid #c8c6c4; }
  .filters .pane-head { padding: 0 12px 0 15px; }
  .filters .pane-head button { margin-left: 10px; }
  .filters .search { height: 41px; margin: 7px 15px 5px 10px; padding: 0 14px; border-color: #b3b0ad; gap: 17px; }
  .filter-list { height: 586px; overflow: hidden; border-top: 1px solid #c8c6c4; padding: 17px 9px 0 10px; }
  .filter-title { display: flex; align-items: center; justify-content: space-between; height: 30px; margin-bottom: 7px; padding-right: 4px; }
  .filter-title h3 { font-size: 15px; font-weight: 400; color: #484644; }
  .filter-card { display: flex; flex-direction: column; height: 59px; margin-bottom: 8px; padding: 4px 11px; border: 1px solid #c8c6c4; border-radius: 3px; line-height: 24px; color: #484644; }
  .filter-card.drop { align-items: center; justify-content: center; margin-bottom: 30px; }
  .filter-scroll { position: absolute; right: 0; top: 117px; width: 6px; height: 510px; border-radius: 3px; background: #d2d0ce; }
  .highlight { position: absolute; left: -11px; top: -11px; right: 2px; bottom: 10px; border: 4px solid #000; border-radius: 2px; pointer-events: none; z-index: 3; }

  .page-tabs { display: flex; height: 45px; flex: none; align-items: stretch; }
  .arrow { width: 28px; display: flex; align-items: center; justify-content: center; }
  .arrow.left { margin-left: 39px; }
  .arrow::after { content: ""; border: 5px solid transparent; border-left: 6px solid #c8c6c4; border-right: 0; }
  .arrow.left::after { border-left: 0; border-right: 6px solid #d8d6d4; }
  .page-tab { width: 127px; background: #fff; border: 1px solid #c8c6c4; border-width: 0 1px; border-bottom: 5px solid #3a7562; font-weight: 600; color: #201f1e; padding-top: 4px; }
  .add { width: 51px; margin: 2px 0; background: #3a7562; display: flex; align-items: center; justify-content: center; }

  .format { width: 236px; flex: none; border-left: 1px solid #dedcda; display: flex; flex-direction: column; }
  .format .pane-head { padding: 0 10px 0 11px; flex: none; }
  .sub { font-size: 14px; line-height: 20px; margin: -1px 11px 5px; color: #252423; }
  .modes { display: flex; justify-content: space-between; padding: 0 15px; height: 41px; align-items: center; }
  .modes button.on { width: 41px; height: 41px; background: #d2d0ce; border-radius: 3px; display: flex; align-items: center; justify-content: center; }
  .pointer { width: 100%; margin: 6px 0 10px; }
  .format .search { margin: 0 11px; flex: none; }
  .format-tabs { display: flex; align-items: center; gap: 24px; height: 53px; padding: 0 20px 0 16px; font-size: 16px; flex: none; }
  .format-tabs button { height: 34px; margin-top: 19px; border-bottom: 3px solid transparent; padding-bottom: 4px; }
  .format-tabs .active { font-weight: 600; border-color: #3a7f68; }
  .format-tabs svg { margin: 13px 0 0 auto; }
  .settings { position: relative; padding-top: 17px; flex: 1; min-height: 0; overflow: hidden; }
  .setting { display: flex; align-items: center; height: 53px; padding: 0 10px 0 13px; border-bottom: 1px solid #e1dfdd; gap: 8px; color: #252423; }
  .setting:nth-child(9) { border: 0; }
  .name { flex: 1; font-weight: 600; font-size: 14px; }
  .setting.off { color: #a19f9d; }
  .switch { position: relative; display: flex; align-items: center; justify-content: space-between; flex-direction: row-reverse; width: 42px; height: 21px; margin-left: 3px; padding: 0 5px; border: 1px solid #797775; border-radius: 11px; background: #fff; color: #605e5c; font-size: 11px; }
  .switch i { width: 10px; height: 10px; border-radius: 5px; background: #605e5c; }
  .switch.on { flex-direction: row; background: #5a5856; color: #fff; }
  .switch.on i { background: #fff; }
  .switch input { position: absolute; inset: 0; margin: 0; opacity: 0; }
  .settings-scroll { position: absolute; right: 0; top: 17px; width: 8px; height: 427px; border-radius: 4px; background: rgba(0, 0, 0, 0.14); }

  .data { width: 216px; flex: none; border-left: 1px solid #dedcda; overflow: hidden; }
  .data-body { width: 236px; height: 100%; display: flex; flex-direction: column; }
  .data .pane-head { padding: 0 9px 0 10px; flex: none; }
  .data .search { margin: 8px 5px 12px; flex: none; }
  .tree { flex: 1; display: flex; flex-direction: column; padding-bottom: 4px; font-size: 14px; min-height: 0; }
  .node { flex: 1; display: flex; align-items: center; gap: 7px; padding-left: 12px; white-space: nowrap; color: #484644; }
  .field { padding-left: 49px; gap: 33px; }
  .field input { appearance: none; width: 17px; height: 17px; margin: 0; border: 1px solid #8a8886; border-radius: 3px; background: #f8f8f7; }
  .field input:checked {
    border-color: #2f7a62;
    background: #3a7562 url("data:image/svg+xml,%3Csvg xmlns='http://www.w3.org/2000/svg' viewBox='0 0 15 15'%3E%3Cpath d='M3 7.500l3 3 6-6' fill='none' stroke='white' stroke-width='1.500'/%3E%3C/svg%3E");
  }
  .badged { position: relative; }
  .badge { position: absolute; left: 9px; top: 8px; }

  .chev.down { transform: rotate(90deg); }
  .chev.small { height: 10px; }
</style>
